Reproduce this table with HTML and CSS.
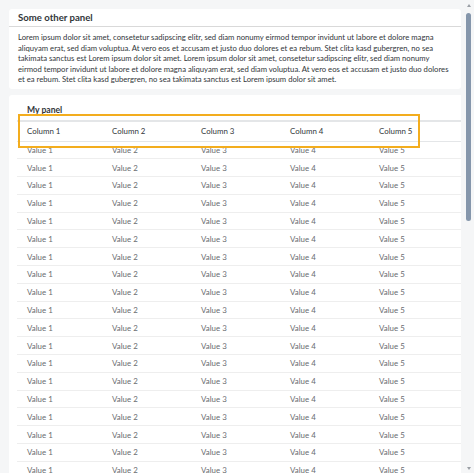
FILE: index.html
```html
<!DOCTYPE html>
<html>
<head>
<meta charset="utf-8">
<link rel="stylesheet" href="styles.css">
</head>
<body>
<div class="page">
  <div class="content">
    <section class="panel panel-text">
      <header class="panel-header">Some other panel</header>
      <p class="panel-body">Lorem ipsum dolor sit amet, consetetur sadipscing elitr, sed diam nonumy eirmod tempor invidunt ut labore et dolore magna aliquyam erat, sed diam voluptua. At vero eos et accusam et justo duo dolores et ea rebum. Stet clita kasd gubergren, no sea takimata sanctus est Lorem ipsum dolor sit amet. Lorem ipsum dolor sit amet, consetetur sadipscing elitr, sed diam nonumy eirmod tempor invidunt ut labore et dolore magna aliquyam erat, sed diam voluptua. At vero eos et accusam et justo duo dolores et ea rebum. Stet clita kasd gubergren, no sea takimata sanctus est Lorem ipsum dolor sit amet.</p>
    </section>
    <section class="panel panel-table">
      <div class="toolbar">My panel</div>
      <div class="table">
        <div class="row head"><span>Column 1</span><span>Column 2</span><span>Column 3</span><span>Column 4</span><span>Column 5</span></div>
        <div class="row"><span>Value 1</span><span>Value 2</span><span>Value 3</span><span>Value 4</span><span>Value 5</span></div>
        <div class="row"><span>Value 1</span><span>Value 2</span><span>Value 3</span><span>Value 4</span><span>Value 5</span></div>
        <div class="row"><span>Value 1</span><span>Value 2</span><span>Value 3</span><span>Value 4</span><span>Value 5</span></div>
        <div class="row"><span>Value 1</span><span>Value 2</span><span>Value 3</span><span>Value 4</span><span>Value 5</span></div>
        <div class="row"><span>Value 1</span><span>Value 2</span><span>Value 3</span><span>Value 4</span><span>Value 5</span></div>
        <div class="row"><span>Value 1</span><span>Value 2</span><span>Value 3</span><span>Value 4</span><span>Value 5</span></div>
        <div class="row"><span>Value 1</span><span>Value 2</span><span>Value 3</span><span>Value 4</span><span>Value 5</span></div>
        <div class="row"><span>Value 1</span><span>Value 2</span><span>Value 3</span><span>Value 4</span><span>Value 5</span></div>
        <div class="row"><span>Value 1</span><span>Value 2</span><span>Value 3</span><span>Value 4</span><span>Value 5</span></div>
        <div class="row"><span>Value 1</span><span>Value 2</span><span>Value 3</span><span>Value 4</span><span>Value 5</span></div>
        <div class="row"><span>Value 1</span><span>Value 2</span><span>Value 3</span><span>Value 4</span><span>Value 5</span></div>
        <div class="row"><span>Value 1</span><span>Value 2</span><span>Value 3</span><span>Value 4</span><span>Value 5</span></div>
        <div class="row"><span>Value 1</span><span>Value 2</span><span>Value 3</span><span>Value 4</span><span>Value 5</span></div>
        <div class="row"><span>Value 1</span><span>Value 2</span><span>Value 3</span><span>Value 4</span><span>Value 5</span></div>
        <div class="row"><span>Value 1</span><span>Value 2</span><span>Value 3</span><span>Value 4</span><span>Value 5</span></div>
        <div class="row"><span>Value 1</span><span>Value 2</span><span>Value 3</span><span>Value 4</span><span>Value 5</span></div>
        <div class="row"><span>Value 1</span><span>Value 2</span><span>Value 3</span><span>Value 4</span><span>Value 5</span></div>
        <div class="row"><span>Value 1</span><span>Value 2</span><span>Value 3</span><span>Value 4</span><span>Value 5</span></div>
        <div class="row"><span>Value 1</span><span>Value 2</span><span>Value 3</span><span>Value 4</span><span>Value 5</span></div>
      </div>
    </section>
  </div>
  <div class="scrollbar">
    <div class="arrow up"></div>
    <div class="track"><div class="thumb"></div></div>
    <div class="arrow down"></div>
  </div>
</div>
<div class="highlight"></div>
</body>
</html>
```
FILE: styles.css
```css
html, body {
  margin: 0;
  padding: 0;
  height: 100%;
  overflow: hidden;
}
body {
  background: #f5f6f7;
  font-family: "Lato", "Noto Sans", sans-serif;
  color: #32363a;
}
.page {
  display: flex;
  height: 473px;
}
.content {
  flex: 1;
  padding: 9px 2px 0 9px;
  overflow: hidden;
  display: flex;
  flex-direction: column;
  gap: 6px;
}
.panel {
  background: #ffffff;
  border-radius: 3px;
}
.panel-header {
  height: 17px;
  line-height: 17px;
  padding: 0 9px;
  font-size: 9.6px;
  font-weight: 700;
  border-bottom: 1px solid #d9d9d9;
}
.panel-body {
  margin: 0;
  padding: 5px 9px 4px;
  font-size: 7.7px;
  line-height: 10.5px;
}
.panel-table {
  flex: 1;
  padding: 10px 0 0 8px;
  border-radius: 3px 0 0 0;
}
.toolbar {
  height: 15px;
  line-height: 10px;
  padding-left: 10px;
  font-size: 8.6px;
  font-weight: 700;
}
.table {
  border-top: 2px solid #e4e6e8;
}
.row {
  display: grid;
  grid-template-columns: 85px 89px 89px 89px 1fr;
  height: 17.8px;
  align-items: center;
  border-bottom: 1px solid #eeeeee;
  box-sizing: border-box;
  font-size: 7.9px;
  color: #6a6d70;
}
.row span {
  padding-left: 10px;
}
.row.head {
  height: 20px;
  color: #32363a;
  border-bottom: 1px solid #e4e6e8;
}
.scrollbar {
  width: 11px;
  display: flex;
  flex-direction: column;
  align-items: center;
  background: #f5f6f7;
}
.arrow {
  width: 0;
  height: 0;
  border-left: 2.5px solid transparent;
  border-right: 2.5px solid transparent;
}
.arrow.up {
  margin-top: 4px;
  border-bottom: 3px solid #9a9fa5;
}
.arrow.down {
  margin-bottom: 3px;
  border-top: 3px solid #9a9fa5;
}
.track {
  flex: 1;
  width: 100%;
  padding-top: 6px;
  display: flex;
  justify-content: center;
}
.thumb {
  width: 5px;
  height: 208px;
  background: #8596ab;
  border-radius: 3px;
}
.highlight {
  position: absolute;
  left: 18px;
  top: 114px;
  width: 402px;
  height: 34px;
  box-sizing: border-box;
  border: 2px solid #f3ad1e;
  pointer-events: none;
}
```
